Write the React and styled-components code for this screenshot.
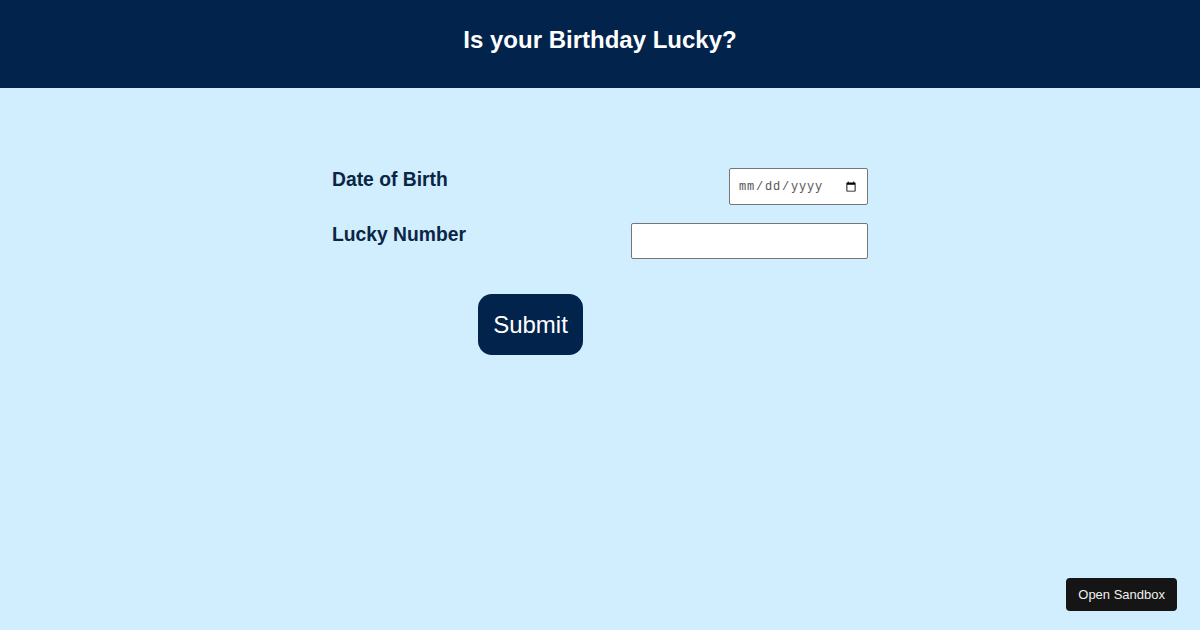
import React, { useState } from 'react'
import styled, { createGlobalStyle } from 'styled-components'

const GlobalStyle = createGlobalStyle`
  html, body {
    margin: 0;
    padding: 0;
    background-color: #d0eefe;
    font-family: "Liberation Sans", Arial, sans-serif;
  }
`

const Page = styled.div`
  min-height: 630px;
  background-color: #d0eefe;
`

const Header = styled.header`
  height: 88px;
  display: flex;
  align-items: center;
  justify-content: center;
  background-color: #02244c;
`

const Title = styled.h1`
  margin: 0;
  padding-bottom: 8px;
  color: #ffffff;
  font-size: 24px;
  font-weight: 700;
`

const Form = styled.form`
  width: 536px;
  margin: 80px auto 0;
  display: flex;
  flex-direction: column;
`

const Row = styled.div`
  display: flex;
  justify-content: space-between;
  align-items: flex-start;
  margin-bottom: ${props => props.gap}px;
`

const Label = styled.label`
  margin-top: 1px;
  color: #0b2545;
  font-size: 19.3px;
  font-weight: 700;
`

const Input = styled.input`
  box-sizing: border-box;
  width: ${props => props.w}px;
  height: ${props => props.h}px;
  padding: 0 8px;
  border: 1px solid #767676;
  border-radius: 2px;
  background: #ffffff;
  font-family: "Liberation Mono", monospace;
  font-size: 12px;
  letter-spacing: ${props => props.spacing || 0}px;
  color: #555;
`

const Submit = styled.button`
  align-self: flex-start;
  margin-left: 146px;
  margin-top: 13px;
  width: 105px;
  height: 61px;
  border: none;
  border-radius: 14px;
  background-color: #02244c;
  color: #ffffff;
  font-family: "Liberation Sans", Arial, sans-serif;
  font-size: 24px;
  cursor: pointer;
`

const SandboxButton = styled.a`
  position: fixed;
  right: 23px;
  bottom: 19px;
  padding: 9px 12px;
  border-radius: 4px;
  background-color: #151515;
  color: #f0f0f0;
  font-family: "Liberation Sans", Arial, sans-serif;
  font-size: 13px;
  line-height: 15px;
  text-decoration: none;
`

export default function App() {
  const [dob, setDob] = useState('')
  const [lucky, setLucky] = useState('')

  return (
    <Page>
      <GlobalStyle />
      <Header>
        <Title>Is your Birthday Lucky?</Title>
      </Header>
      <Form onSubmit={(e) => e.preventDefault()}>
        <Row gap={18}>
          <Label htmlFor="dob">Date of Birth</Label>
          <Input id="dob" type="date" w={139} h={37} spacing={0.8} value={dob} onChange={(e) => setDob(e.target.value)} />
        </Row>
        <Row gap={22}>
          <Label htmlFor="lucky">Lucky Number</Label>
          <Input id="lucky" type="number" w={237} h={36} value={lucky} onChange={(e) => setLucky(e.target.value)} />
        </Row>
        <Submit type="submit">Submit</Submit>
      </Form>
      <SandboxButton href="#">Open Sandbox</SandboxButton>
    </Page>
  )
}
